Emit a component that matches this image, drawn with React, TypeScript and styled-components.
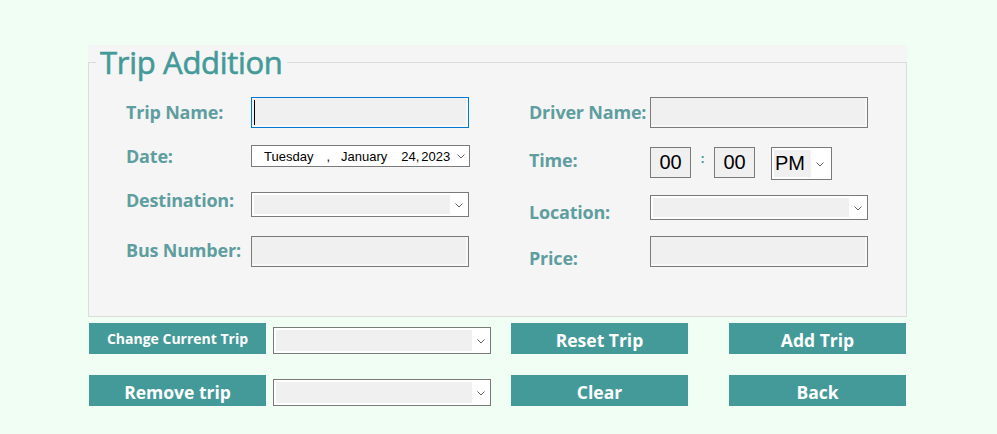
import React from 'react'
import styled, { createGlobalStyle } from 'styled-components'

const colors = {
  page: '#F0FEF4',
  panel: '#F5F5F5',
  frame: '#DCDCDC',
  teal: '#449A98',
  label: '#5F9EA0',
  field: '#F0F0F0',
  fieldBorder: '#7A7A7A',
  focus: '#0078D7',
  chevron: '#606060',
}

const GlobalStyle = createGlobalStyle`
  body {
    margin: 0;
    background: ${colors.page};
    font-family: 'Open Sans', 'Noto Sans', sans-serif;
  }
`

const Chevron = () => (
  <svg width="8" height="5" viewBox="0 0 8 5">
    <path d="M0.5 0.5 L4 4 L7.5 0.5" fill="none" stroke={colors.chevron} strokeWidth="1" />
  </svg>
)

interface LabelProps {
  text: string
  offset: number
}

const FieldLabel = ({ text, offset }: LabelProps) => <StyledLabel $offset={offset}>{text}</StyledLabel>

const ComboBox = ({ width, height }: { width: number; height: number }) => (
  <StyledCombo $width={width} $height={height}>
    <StyledComboValue />
    <StyledComboArrow>
      <Chevron />
    </StyledComboArrow>
  </StyledCombo>
)

const DatePicker = () => (
  <StyledDate>
    <StyledDatePart $space={12}>Tuesday</StyledDatePart>
    <StyledDatePart $space={13}>,</StyledDatePart>
    <StyledDatePart $space={11}>January</StyledDatePart>
    <StyledDatePart $space={14}>24,</StyledDatePart>
    <StyledDatePart $space={2}>2023</StyledDatePart>
    <StyledDateArrow>
      <Chevron />
    </StyledDateArrow>
  </StyledDate>
)

const TimePicker = () => (
  <StyledTime>
    <StyledTimeBox>00</StyledTimeBox>
    <StyledColon>:</StyledColon>
    <StyledTimeBox>00</StyledTimeBox>
    <StyledMeridiem>
      <StyledMeridiemValue>PM</StyledMeridiemValue>
      <StyledComboArrow>
        <Chevron />
      </StyledComboArrow>
    </StyledMeridiem>
  </StyledTime>
)

export default function App() {
  return (
    <>
      <GlobalStyle />
      <StyledPage>
        <StyledPanel>
          <StyledGroup>
            <StyledLegend>Trip Addition</StyledLegend>
            <StyledColumns>
              <StyledColumn $rows="48px 47px 44px 31px" $labelWidth={125}>
                <FieldLabel text="Trip Name:" offset={3} />
                <StyledTextBox $focused>
                  <StyledCaret />
                </StyledTextBox>
                <FieldLabel text="Date:" offset={-1} />
                <DatePicker />
                <FieldLabel text="Destination:" offset={-4} />
                <ComboBox width={218} height={25} />
                <FieldLabel text="Bus Number:" offset={2} />
                <StyledTextBox />
              </StyledColumn>
              <StyledColumn $rows="50px 48px 41px 31px" $labelWidth={121}>
                <FieldLabel text="Driver Name:" offset={3} />
                <StyledTextBox />
                <FieldLabel text="Time:" offset={1} />
                <TimePicker />
                <FieldLabel text="Location:" offset={5} />
                <ComboBox width={218} height={25} />
                <FieldLabel text="Price:" offset={10} />
                <StyledTextBox />
              </StyledColumn>
            </StyledColumns>
          </StyledGroup>
        </StyledPanel>
        <StyledActions>
          <StyledButton $size={14}>Change Current Trip</StyledButton>
          <ComboBox width={218} height={27} />
          <StyledButton>Reset Trip</StyledButton>
          <StyledButton>Add Trip</StyledButton>
          <StyledButton>Remove trip</StyledButton>
          <ComboBox width={218} height={27} />
          <StyledButton>Clear</StyledButton>
          <StyledButton>Back</StyledButton>
        </StyledActions>
      </StyledPage>
    </>
  )
}

const StyledPage = styled.div`
  padding: 45px 0 0 88px;
`
const StyledPanel = styled.div`
  width: 819px;
  background: ${colors.panel};
`
const StyledGroup = styled.fieldset`
  margin: 0;
  min-width: 0;
  border: 1px solid ${colors.frame};
  padding: 18px 0 49px 7px;
`
const StyledLegend = styled.legend`
  margin: 0;
  padding: 0 4px;
  font-size: 31px;
  line-height: 34px;
  letter-spacing: -0.3px;
  color: ${colors.teal};
  -webkit-text-stroke: 0.6px ${colors.teal};
`
const StyledColumns = styled.div`
  display: grid;
  grid-template-columns: 403px 339px;
  padding-left: 30px;
`
const StyledColumn = styled.div<{ $rows: string; $labelWidth: number }>`
  display: grid;
  grid-template-columns: ${(p) => p.$labelWidth}px 218px;
  grid-template-rows: ${(p) => p.$rows};
  align-items: start;
`
const StyledLabel = styled.div<{ $offset: number }>`
  margin-top: ${(p) => p.$offset}px;
  font-size: 18px;
  line-height: 24px;
  font-weight: 700;
  letter-spacing: -0.2px;
  color: ${colors.label};
  white-space: nowrap;
`
const StyledTextBox = styled.div<{ $focused?: boolean }>`
  box-sizing: border-box;
  display: flex;
  align-items: center;
  width: 218px;
  height: 31px;
  padding: 0 2px;
  background: ${colors.field};
  border: 1px solid ${(p) => (p.$focused ? colors.focus : colors.fieldBorder)};
  box-shadow: inset -2px -2px 0 #f8f8f8;
`
const StyledCaret = styled.span`
  width: 1px;
  height: 25px;
  background: #000;
`
const StyledCombo = styled.div<{ $width: number; $height: number }>`
  box-sizing: border-box;
  display: flex;
  width: ${(p) => p.$width}px;
  height: ${(p) => p.$height}px;
  padding: 2px 0 2px 2px;
  background: #fff;
  border: 1px solid ${colors.fieldBorder};
`
const StyledComboValue = styled.div`
  flex: 1;
  background: ${colors.field};
`
const StyledComboArrow = styled.div`
  width: 18px;
  display: flex;
  align-items: center;
  justify-content: center;
  padding-top: 1px;
`
const StyledDate = styled.div`
  box-sizing: border-box;
  display: flex;
  align-items: center;
  width: 219px;
  height: 22px;
  background: #fff;
  border: 1px solid ${colors.fieldBorder};
  font-family: 'Liberation Sans', Arial, sans-serif;
  font-size: 13px;
  color: #000;
`
const StyledDatePart = styled.span<{ $space: number }>`
  margin-left: ${(p) => p.$space}px;
`
const StyledDateArrow = styled.span`
  margin-left: auto;
  width: 16px;
  display: flex;
  justify-content: center;
  padding-top: 1px;
`
const StyledTime = styled.div`
  display: flex;
  align-items: flex-start;
`
const StyledTimeBox = styled.div`
  box-sizing: border-box;
  width: 41px;
  height: 31px;
  display: flex;
  align-items: center;
  justify-content: center;
  background: ${colors.field};
  border: 1px solid ${colors.fieldBorder};
  font-family: 'Liberation Sans', Arial, sans-serif;
  font-size: 20px;
  color: #000;
`
const StyledColon = styled.span`
  width: 23px;
  text-align: center;
  margin-top: 2px;
  font-size: 13px;
  line-height: 18px;
  font-weight: 700;
  color: ${colors.teal};
`
const StyledMeridiem = styled.div`
  box-sizing: border-box;
  display: flex;
  width: 61px;
  height: 33px;
  margin-left: 16px;
  padding: 2px 0 2px 2px;
  background: #fff;
  border: 1px solid ${colors.fieldBorder};
`
const StyledMeridiemValue = styled.div`
  width: 37px;
  display: flex;
  align-items: center;
  padding-left: 1px;
  box-sizing: border-box;
  background: ${colors.field};
  font-family: 'Liberation Sans', Arial, sans-serif;
  font-size: 20px;
  color: #000;
`
const StyledActions = styled.div`
  display: grid;
  grid-template-columns: 184px 238px 218px 177px;
  grid-auto-rows: 31px;
  row-gap: 21px;
  align-items: end;
  margin-top: 6px;
  margin-left: 1px;
`
const StyledButton = styled.div<{ $size?: number }>`
  box-sizing: border-box;
  width: 177px;
  height: 31px;
  display: flex;
  align-items: center;
  justify-content: center;
  padding-top: ${(p) => (p.$size ? 0 : 3)}px;
  background: ${colors.teal};
  color: #fff;
  font-size: ${(p) => p.$size ?? 17.5}px;
  font-weight: 700;
  white-space: nowrap;
  cursor: pointer;
`
